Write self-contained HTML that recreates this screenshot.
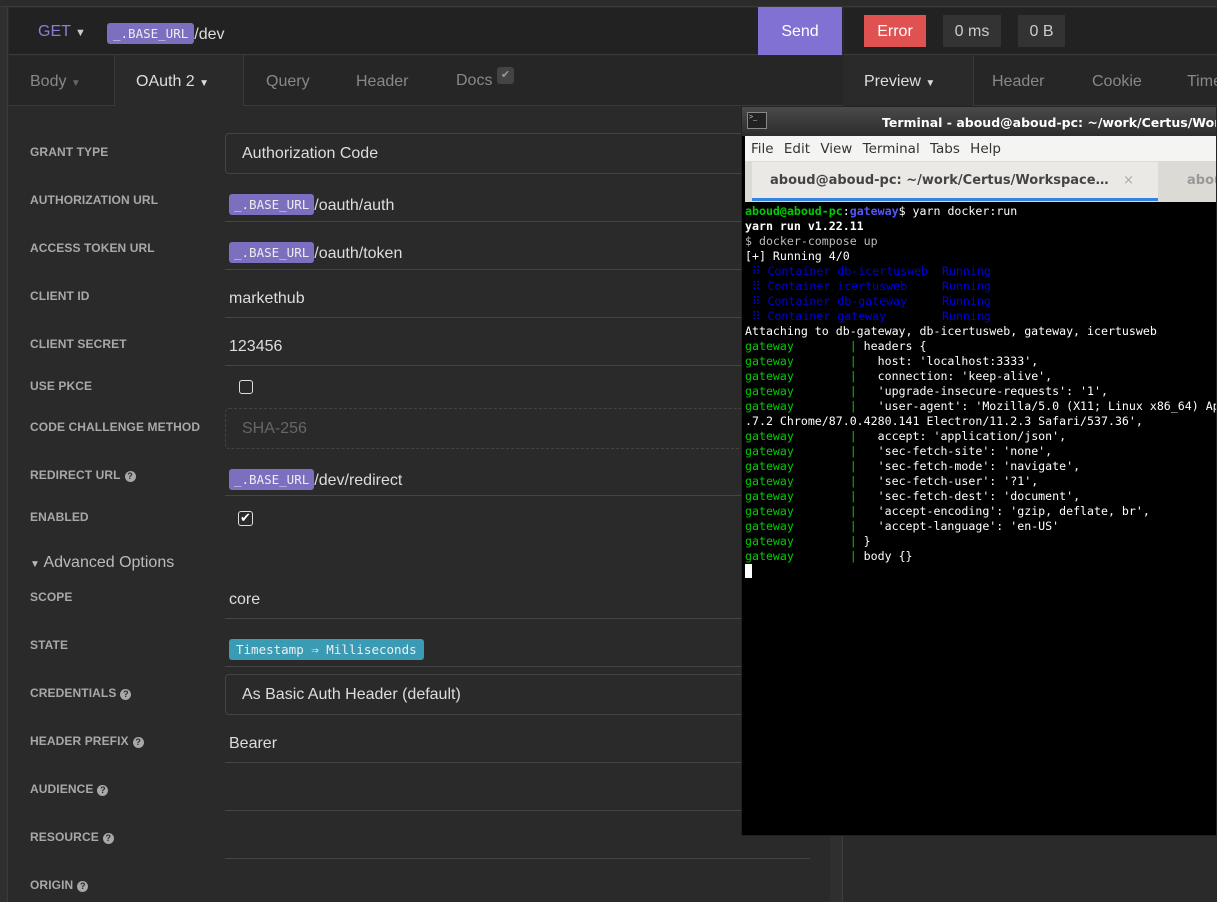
<!DOCTYPE html>
<html><head><meta charset="utf-8">
<style>
*{margin:0;padding:0;box-sizing:border-box}
body{width:1217px;height:902px;overflow:hidden;background:#2a2a2a;font-family:"Liberation Sans","DejaVu Sans",sans-serif;position:relative}
.a{position:absolute}
.lbl{position:absolute;left:30px;font-size:12px;font-weight:bold;color:#a8a8a8;letter-spacing:0.1px}
.q{display:inline-block;width:11px;height:11px;border-radius:50%;background:#a8a8a8;color:#2a2a2a;font-size:9px;text-align:center;line-height:11px;vertical-align:-1px;margin-left:4px;position:relative;top:-1px}
.line{position:absolute;left:225px;width:585px;height:1px;background:#444}
.val{position:absolute;left:229px;font-size:16px;color:#ddd}
.tag{display:inline-block;background:#7d6fc0;color:#eee;font-family:"DejaVu Sans Mono",monospace;font-size:12.5px;padding:3px 5px;border-radius:3px;vertical-align:1px}
.box{position:absolute;left:225px;width:600px;height:41px;border:1px solid #444;border-radius:4px;font-size:16px;color:#ddd;padding:11px 16px}
.tab{position:absolute;font-size:16px;color:#888}
.term{font-family:"DejaVu Sans Mono",monospace;font-size:11.6px;line-height:15px;color:#fff;white-space:pre}
.g{color:#0c0}.b{color:#00d}
</style></head><body>
<div class="a" style="left:0;top:0;width:1217px;height:7px;background:#2b2b2b;border-bottom:1px solid #3a3a3a"></div>
<div class="a" style="left:0;top:7px;width:8px;height:895px;background:#2f2f2f;border-right:1px solid #3c3c3c"></div>
<div class="a" style="left:9px;top:8px;width:834px;height:47px;background:#222;border-bottom:1px solid #3a3a3a"></div>
<div class="a" style="left:38px;top:23px;font-size:16px;color:#8a7fd6">GET <span style="font-size:11px;color:#ccc">▼</span></div>
<div class="a" style="left:107px;top:23px;font-size:16px;color:#ddd"><span class="tag" style="padding:3px 6px">_.BASE_URL</span>/dev</div>
<div class="a" style="left:758px;top:7px;width:84px;height:48px;background:#8171d3;color:#fff;font-size:16px;text-align:center;line-height:50px">Send</div>
<div class="a" style="left:9px;top:56px;width:834px;height:50px;background:#262626;border-bottom:1px solid #3a3a3a"></div>
<div class="a" style="left:114px;top:55px;width:130px;height:51px;background:#2a2a2a;border-left:1px solid #3a3a3a;border-right:1px solid #3a3a3a"></div>
<div class="tab" style="left:30px;top:73px">Body <span style="font-size:10px;color:#666">▼</span></div>
<div class="tab" style="left:136px;top:73px;color:#ddd">OAuth 2 <span style="font-size:10px;color:#ddd">▼</span></div>
<div class="tab" style="left:266px;top:73px">Query</div>
<div class="tab" style="left:356px;top:73px">Header</div>
<div class="tab" style="left:456px;top:72px">Docs</div>
<div class="a" style="left:497px;top:67px;width:17px;height:17px;background:#444;border-radius:3px;color:#999;font-size:11px;text-align:center;line-height:17px">✔</div>
<div class="a" style="left:830px;top:106px;width:13px;height:796px;background:#2f2f2f;border-right:1px solid #3e3e3e"></div>
<div class="lbl" style="top:145px">GRANT TYPE</div>
<div class="box" style="top:133px">Authorization Code</div>
<div class="lbl" style="top:193px">AUTHORIZATION URL</div>
<div class="val" style="top:194px"><span class="tag">_.BASE_URL</span>/oauth/auth</div><div class="line" style="top:221px"></div>
<div class="lbl" style="top:241px">ACCESS TOKEN URL</div>
<div class="val" style="top:242px"><span class="tag">_.BASE_URL</span>/oauth/token</div><div class="line" style="top:269px"></div>
<div class="lbl" style="top:289px">CLIENT ID</div>
<div class="val" style="top:290px">markethub</div><div class="line" style="top:317px"></div>
<div class="lbl" style="top:337px">CLIENT SECRET</div>
<div class="val" style="top:338px">123456</div><div class="line" style="top:365px"></div>
<div class="lbl" style="top:379px">USE PKCE</div>
<div class="a" style="left:239px;top:380px;width:14px;height:14px;border:1.5px solid #ddd;border-radius:3px"></div>
<div class="lbl" style="top:420px">CODE CHALLENGE METHOD</div>
<div class="box" style="top:408px;border:1px dashed #444;color:#666">SHA-256</div>
<div class="lbl" style="top:468px">REDIRECT URL<span class="q">?</span></div>
<div class="val" style="top:469px"><span class="tag">_.BASE_URL</span>/dev/redirect</div><div class="line" style="top:495px"></div>
<div class="lbl" style="top:510px">ENABLED</div>
<div class="a" style="left:238px;top:511px;width:15px;height:15px;border:1.5px solid #ddd;border-radius:3px;color:#fff;font-size:13px;line-height:12px;text-align:center">✔</div>
<div class="a" style="left:30px;top:554px;font-size:16px;color:#bbb"><span style="font-size:10px">▼</span> Advanced Options</div>
<div class="lbl" style="top:590px">SCOPE</div>
<div class="val" style="top:591px">core</div><div class="line" style="top:618px"></div>
<div class="lbl" style="top:638px">STATE</div>
<div class="val" style="top:639px"><span class="tag" style="background:#3b9bb5;padding:3px 7px">Timestamp ⇒ Milliseconds</span></div><div class="line" style="top:666px"></div>
<div class="lbl" style="top:686px">CREDENTIALS<span class="q">?</span></div>
<div class="box" style="top:674px">As Basic Auth Header (default)</div>
<div class="lbl" style="top:734px">HEADER PREFIX<span class="q">?</span></div>
<div class="val" style="top:735px">Bearer</div><div class="line" style="top:762px"></div>
<div class="lbl" style="top:782px">AUDIENCE<span class="q">?</span></div><div class="line" style="top:810px"></div>
<div class="lbl" style="top:830px">RESOURCE<span class="q">?</span></div><div class="line" style="top:858px"></div>
<div class="lbl" style="top:878px">ORIGIN<span class="q">?</span></div>
<div class="a" style="left:844px;top:8px;width:373px;height:47px;background:#222;border-bottom:1px solid #3a3a3a"></div>
<div class="a" style="left:864px;top:15px;width:62px;height:32px;background:#e05252;color:#fff;font-size:16px;text-align:center;line-height:33px">Error</div>
<div class="a" style="left:943px;top:15px;width:58px;height:32px;background:#333;color:#ccc;font-size:16px;text-align:center;line-height:33px">0 ms</div>
<div class="a" style="left:1018px;top:15px;width:47px;height:32px;background:#333;color:#ccc;font-size:16px;text-align:center;line-height:33px">0 B</div>
<div class="a" style="left:844px;top:56px;width:373px;height:50px;background:#262626;border-bottom:1px solid #3a3a3a"></div>
<div class="a" style="left:844px;top:56px;width:130px;height:50px;background:#2a2a2a;border-right:1px solid #3a3a3a"></div>
<div class="tab" style="left:864px;top:73px;color:#ddd">Preview <span style="font-size:10px">▼</span></div>
<div class="tab" style="left:992px;top:73px">Header</div>
<div class="tab" style="left:1092px;top:73px">Cookie</div>
<div class="tab" style="left:1187px;top:73px">Timeline</div>
<div class="a" style="left:741px;top:106px;width:476px;height:730px;background:#000;border:1px solid #222;overflow:hidden">
 <div class="a" style="left:0;top:0;width:476px;height:29px;background:linear-gradient(#4a4a4a,#2c2c2c)"></div>
 <div class="a" style="left:5px;top:5px;width:20px;height:17px;background:#222;border:1px solid #888;color:#ccc;font-size:7px;line-height:7px;padding:1px">&gt;_</div>
 <div class="a" style="left:140px;top:8px;font-size:12.5px;font-weight:bold;color:#fff;white-space:nowrap;font-family:'DejaVu Sans',sans-serif">Terminal - aboud@aboud-pc: ~/work/Certus/Workspace</div>
 <div class="a" style="left:3px;top:29px;width:473px;height:25px;background:#f4f4f2;font-size:13.5px;color:#333;font-family:'DejaVu Sans',sans-serif;padding:5px 6px;white-space:nowrap;word-spacing:6px">File Edit View Terminal Tabs Help</div>
 <div class="a" style="left:3px;top:54px;width:473px;height:41px;background:#dcdad5"></div>
 <div class="a" style="left:10px;top:55px;width:406px;height:39px;background:#eae9e6;border-bottom:3px solid #3584e4;font-size:13px;font-weight:bold;color:#444;font-family:'DejaVu Sans',sans-serif;padding:11px 0 0 18px;white-space:nowrap">aboud@aboud-pc: ~/work/Certus/Workspace… <span style="color:#aaa;font-weight:normal;margin-left:10px">×</span></div>
 <div class="a" style="left:445px;top:66px;font-size:13px;font-weight:bold;color:#999;font-family:'DejaVu Sans',sans-serif">abou</div>
 <div class="a term" style="left:3px;top:97px"><b class="g">aboud@aboud-pc</b>:<b style="color:#55f">gateway</b>$ yarn docker:run
<b>yarn run v1.22.11</b>
<span style="color:#bbb">$ docker-compose up</span>
[+] Running 4/0
<span class="b"> ⠿ Container db-icertusweb  Running
 ⠿ Container icertusweb     Running
 ⠿ Container db-gateway     Running
 ⠿ Container gateway        Running</span>
Attaching to db-gateway, db-icertusweb, gateway, icertusweb
<span class="g">gateway        |</span> headers {
<span class="g">gateway        |</span>   host: 'localhost:3333',
<span class="g">gateway        |</span>   connection: 'keep-alive',
<span class="g">gateway        |</span>   'upgrade-insecure-requests': '1',
<span class="g">gateway        |</span>   'user-agent': 'Mozilla/5.0 (X11; Linux x86_64) AppleWebKit
.7.2 Chrome/87.0.4280.141 Electron/11.2.3 Safari/537.36',
<span class="g">gateway        |</span>   accept: 'application/json',
<span class="g">gateway        |</span>   'sec-fetch-site': 'none',
<span class="g">gateway        |</span>   'sec-fetch-mode': 'navigate',
<span class="g">gateway        |</span>   'sec-fetch-user': '?1',
<span class="g">gateway        |</span>   'sec-fetch-dest': 'document',
<span class="g">gateway        |</span>   'accept-encoding': 'gzip, deflate, br',
<span class="g">gateway        |</span>   'accept-language': 'en-US'
<span class="g">gateway        |</span> }
<span class="g">gateway        |</span> body {}
<span style="background:#fff"> </span></div>
</div>
</body></html>
